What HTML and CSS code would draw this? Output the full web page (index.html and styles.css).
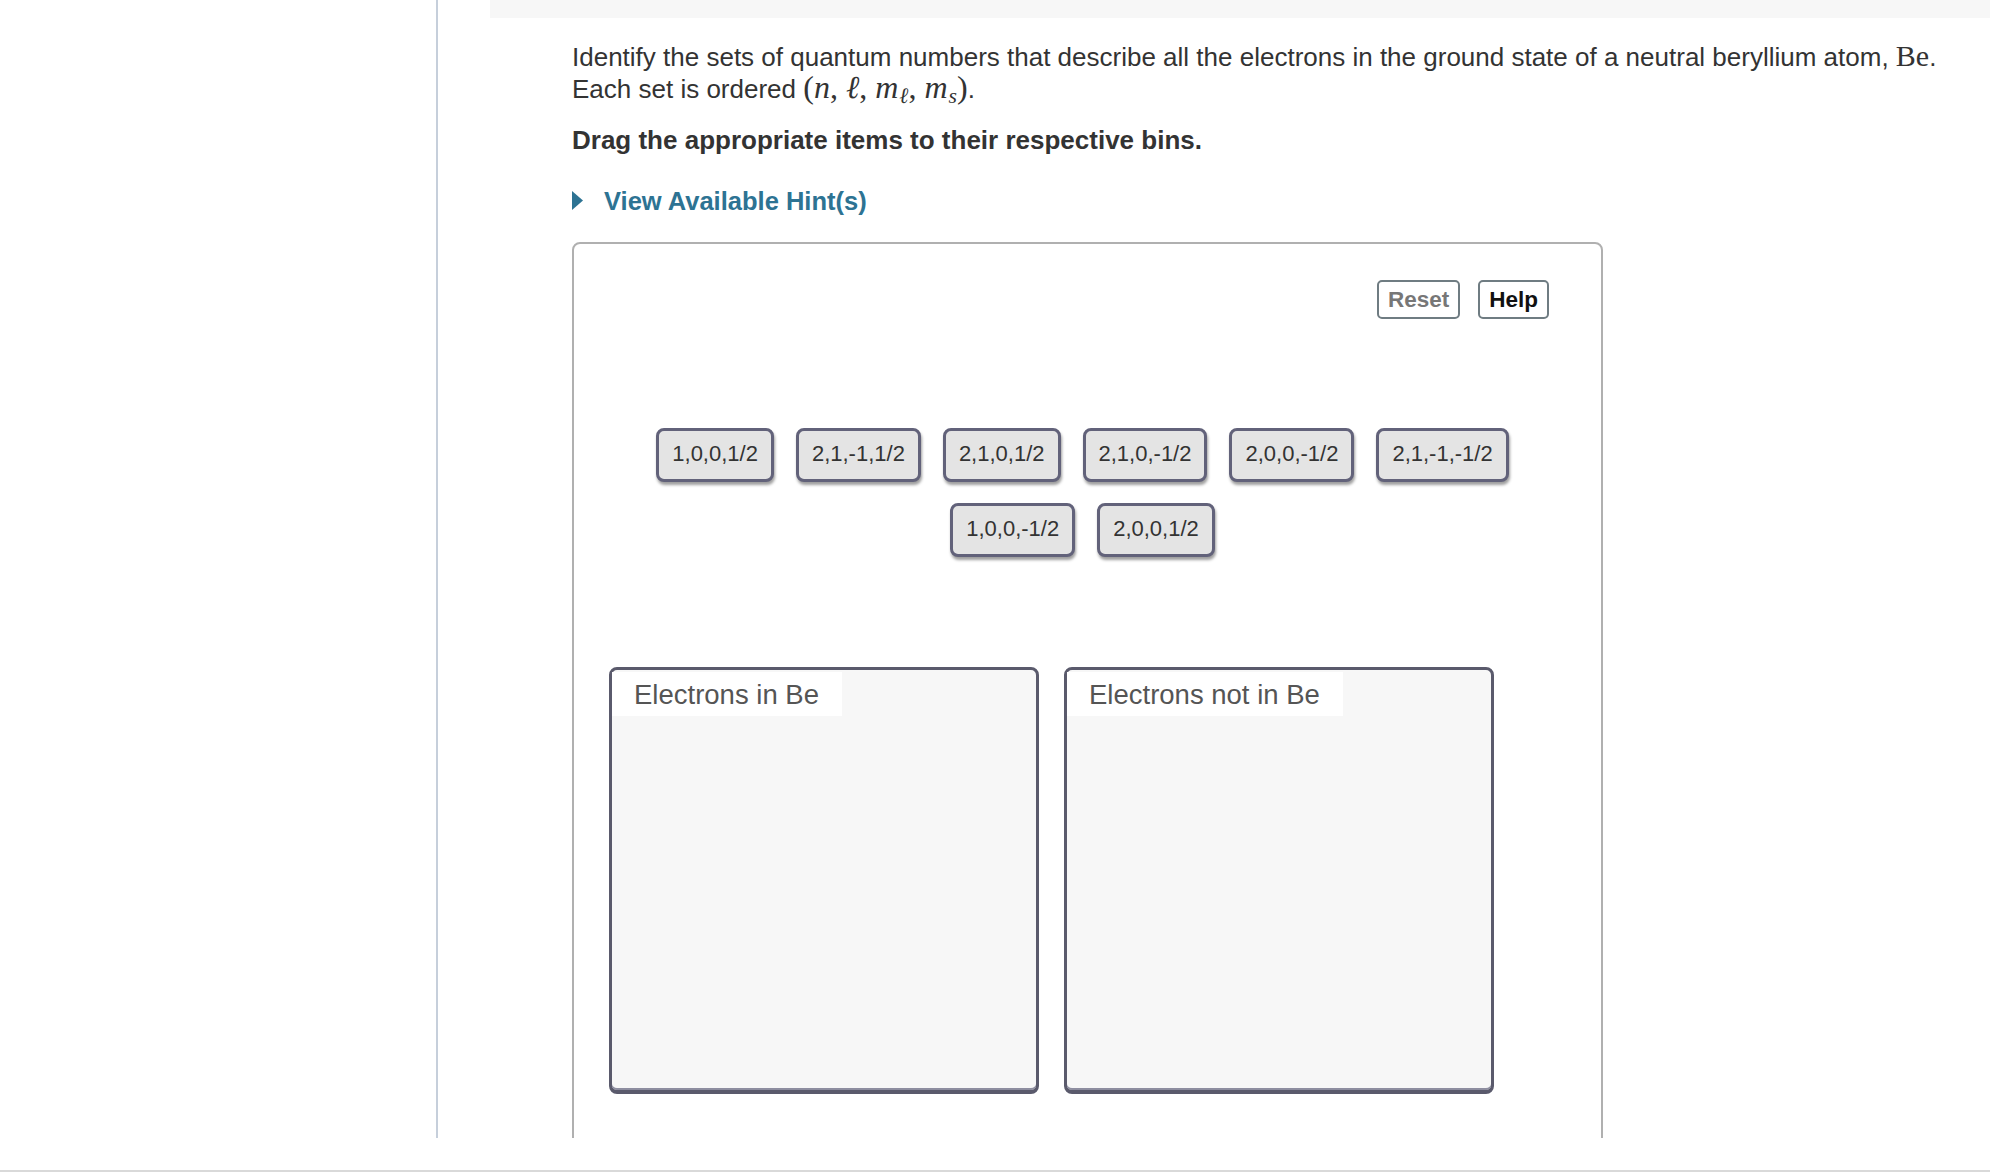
FILE: index.html
```html
<!DOCTYPE html>
<html lang="en">
<head>
<meta charset="utf-8">
<title>Quantum numbers</title>
<link rel="stylesheet" href="styles.css">
</head>
<body>
<div class="app">
  <aside class="sidebar"></aside>
  <main class="main">
    <div class="topband"></div>
    <div class="content">
      <p class="question">Identify the sets of quantum numbers that describe all the electrons in the ground state of a neutral beryllium atom, <span class="math rm">Be</span>.<br>Each set is ordered <span class="math">(<i>n</i><span class="comma">,</span><i>ℓ</i><span class="comma">,</span><i>m</i><sub><i>ℓ</i></sub><span class="comma">,</span><i>m</i><sub><i>s</i></sub>)</span>.</p>
      <p class="instruction">Drag the appropriate items to their respective bins.</p>
      <div class="hint">
        <svg class="hint-arrow" width="11" height="19" viewBox="0 0 11 19"><polygon points="0,0 11,9.5 0,19" fill="#2d7393"/></svg>
        <span>View Available Hint(s)</span>
      </div>
      <section class="widget">
        <div class="toolbar">
          <button class="btn btn-reset">Reset</button>
          <button class="btn btn-help">Help</button>
        </div>
        <div class="tiles">
          <div class="tile">1,0,0,1/2</div>
          <div class="tile">2,1,-1,1/2</div>
          <div class="tile">2,1,0,1/2</div>
          <div class="tile">2,1,0,-1/2</div>
          <div class="tile">2,0,0,-1/2</div>
          <div class="tile">2,1,-1,-1/2</div>
          <div class="tile">1,0,0,-1/2</div>
          <div class="tile">2,0,0,1/2</div>
        </div>
        <div class="bins">
          <div class="bin"><div class="bin-label">Electrons in Be</div></div>
          <div class="bin"><div class="bin-label">Electrons not in Be</div></div>
        </div>
      </section>
    </div>
  </main>
</div>
<footer class="footer"></footer>
</body>
</html>
```
FILE: styles.css
```css
html, body {
  margin: 0;
  padding: 0;
  background: #ffffff;
}
body {
  font-family: "Liberation Sans", Arial, sans-serif;
  color: #333333;
  width: 1990px;
  height: 1174px;
  overflow: hidden;
}
.app {
  display: flex;
  height: 1138px;
  overflow: hidden;
}
.sidebar {
  width: 436px;
  flex: 0 0 436px;
  border-right: 2px solid #c6cfdb;
}
.main {
  flex: 1;
  padding-left: 52px;
}
.topband {
  height: 18px;
  background: #f7f7f7;
}
.content {
  padding-left: 82px;
  padding-top: 23px;
}
.question {
  margin: 0;
  font-size: 26px;
  line-height: 32px;
}
.math {
  font-family: "Liberation Serif", "Times New Roman", serif;
  font-size: 32px;
  line-height: 0;
}
.math.rm {
  font-size: 30px;
}
.math i {
  font-style: italic;
}
.math .comma {
  margin-right: 8px;
}
.math sub {
  font-size: 0.68em;
  line-height: 0;
  vertical-align: -0.22em;
  margin-left: 1px;
}
.instruction {
  margin: 19px 0 0 0;
  font-size: 26px;
  line-height: 32px;
  font-weight: bold;
}
.hint {
  margin-top: 30px;
  display: flex;
  align-items: center;
  gap: 21px;
  height: 31px;
  font-size: 25.5px;
  font-weight: bold;
  color: #2d7393;
}
.hint-arrow {
  display: block;
  margin-top: -2px;
}
.widget {
  margin-top: 25px;
  width: 1027px;
  height: 1000px;
  border: 2px solid #b0b0b0;
  border-radius: 8px;
}
.toolbar {
  display: flex;
  justify-content: flex-end;
  gap: 18px;
  padding: 36px 52px 0 0;
}
.btn {
  height: 39px;
  padding: 0 9px;
  border: 2px solid #6f7c82;
  border-radius: 5px;
  background: #ffffff;
  font-family: "Liberation Sans", Arial, sans-serif;
  font-size: 22.5px;
  font-weight: bold;
  cursor: pointer;
}
.btn-reset { color: #777777; }
.btn-help { color: #111111; }
.tiles {
  display: flex;
  flex-wrap: wrap;
  justify-content: center;
  column-gap: 22px;
  row-gap: 21px;
  padding: 109px 60px 0 50px;
}
.tile {
  height: 48px;
  line-height: 46px;
  padding: 0 13px;
  border: 3px solid #62627a;
  border-radius: 8px;
  background: #e4e4e4;
  font-size: 22px;
  color: #333333;
  box-shadow: 1px 3px 3px rgba(0, 0, 0, 0.38);
}
.bins {
  display: flex;
  gap: 25px;
  padding: 110px 0 0 35px;
}
.bin {
  width: 424px;
  height: 420px;
  border: 3px solid #5a5a6c;
  border-bottom-width: 4px;
  border-radius: 8px;
  background: #f7f7f7;
  box-shadow: inset 0 -2px 0 #8e8ea0;
}
.bin-label {
  display: inline-block;
  margin-top: 2px;
  padding: 2px 23px 0 22px;
  height: 42px;
  line-height: 42px;
  background: #ffffff;
  font-size: 27.5px;
  color: #555555;
}
.footer {
  margin-top: 32px;
  height: 2px;
  background: #d9d9d9;
}
```
